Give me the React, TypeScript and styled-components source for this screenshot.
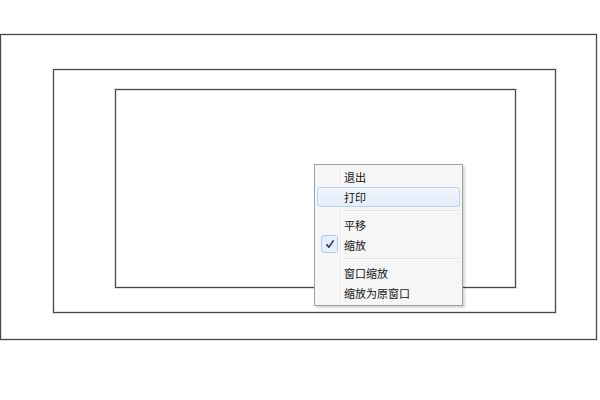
import React from "react";
import styled, { createGlobalStyle } from "styled-components";

const GlobalStyle = createGlobalStyle`
  html, body {
    margin: 0;
    padding: 0;
    background: #ffffff;
  }
  body {
    font-family: "Noto Sans CJK SC", "Noto Sans", sans-serif;
  }
`;

// zona de desenho com os três quadros aninhados
const Stage = styled.div`
  position: relative;
  width: 600px;
  height: 400px;
  padding-top: 34px;
  box-sizing: border-box;
`;

const Frame = styled.div<{ $pad: string }>`
  display: flex;
  box-sizing: border-box;
  border: 1px solid #484848;
  box-shadow: 0 0 0 1px rgba(0, 0, 0, 0.12), inset 0 0 0 1px rgba(0, 0, 0, 0.12);
  padding: ${(p) => p.$pad};
  flex: 1;
`;

const OuterFrame = styled(Frame)`
  flex: none;
  width: 597px;
  height: 306px;
`;

const Viewport = styled.div`
  flex: 1;
  border: 1px solid #484848;
  box-shadow: 0 0 0 1px rgba(0, 0, 0, 0.12), inset 0 0 0 1px rgba(0, 0, 0, 0.12);
`;

// menu de contexto
const Menu = styled.div`
  position: absolute;
  left: 314px;
  top: 164px;
  width: 149px;
  box-sizing: border-box;
  padding: 2px;
  background: #f6f6f6;
  border: 1px solid #a0a0a0;
  box-shadow: 2px 2px 2px rgba(0, 0, 0, 0.16);
  &::before {
    content: "";
    position: absolute;
    top: 2px;
    bottom: 2px;
    left: 25px;
    width: 1px;
    background: #e8e8e8;
    box-shadow: 1px 0 0 #ffffff;
  }
`;

const Item = styled.div<{ $hover?: boolean }>`
  position: relative;
  display: flex;
  align-items: center;
  height: 20px;
  padding-left: 26px;
  font-size: 11px;
  color: #111111;
  border: 1px solid ${(p) => (p.$hover ? "#b8d2ef" : "transparent")};
  border-radius: 3px;
  background: ${(p) =>
    p.$hover ? "linear-gradient(#f1f6fc, #e3edf9)" : "transparent"};
  box-sizing: border-box;
`;

const Separator = styled.div`
  height: 1px;
  margin: 3px 1px 3px 27px;
  background: #e0e0e0;
  border-bottom: 1px solid #ffffff;
`;

const CheckBox = styled.span`
  position: absolute;
  left: 3px;
  top: -1px;
  width: 17px;
  height: 18px;
  box-sizing: border-box;
  border: 1px solid #aecbf0;
  border-radius: 3px;
  background: #e6eefa;
  display: flex;
  align-items: center;
  justify-content: center;
`;

const Check = () => (
  <svg width="10" height="10" viewBox="0 0 10 10">
    <path
      d="M1.5 5.2 L3.8 8.2 L8.6 1.4"
      fill="none"
      stroke="#26305e"
      strokeWidth="1.5"
      strokeLinejoin="round"
    />
  </svg>
);

const App = () => {
  return (
    <>
      <GlobalStyle />
      <Stage>
        <OuterFrame $pad="34px 40px 26px 52px">
          <Frame $pad="19px 39px 24px 61px">
            <Viewport />
          </Frame>
        </OuterFrame>
        <Menu>
          <Item>退出</Item>
          <Item $hover>打印</Item>
          <Separator />
          <Item>平移</Item>
          <Item>
            <CheckBox>
              <Check />
            </CheckBox>
            缩放
          </Item>
          <Separator />
          <Item>窗口缩放</Item>
          <Item>缩放为原窗口</Item>
        </Menu>
      </Stage>
    </>
  );
};

export default App;
